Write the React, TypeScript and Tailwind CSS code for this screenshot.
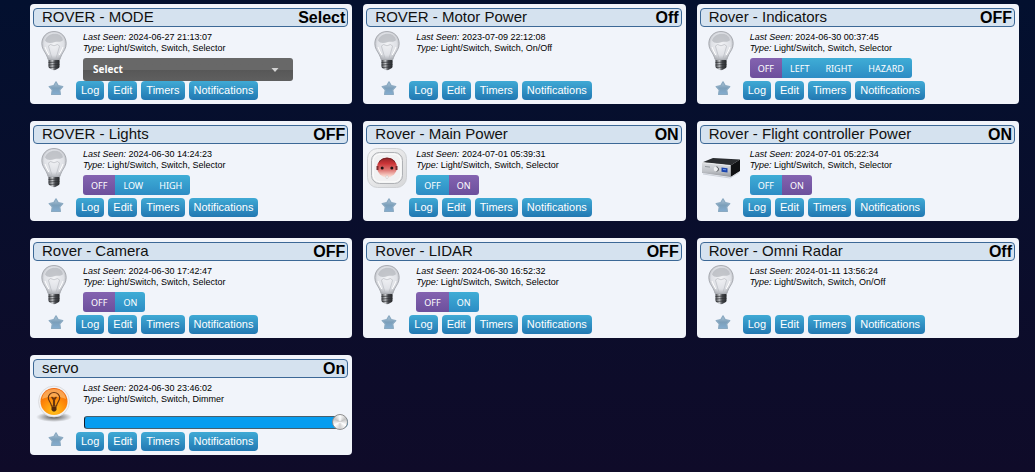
import React, { useId, useState } from "react";

type IconKind = "bulb" | "socket" | "amplifier" | "dimmer";

interface Device {
  name: string;
  status: string;
  lastSeen: string;
  type: string;
  icon: IconKind;
  levels?: string[];
  dropdown?: string[];
  dimmer?: number;
}

const devices: Device[] = [
  { name: "ROVER - MODE", status: "Select", lastSeen: "2024-06-27 21:13:07", type: "Light/Switch, Switch, Selector", icon: "bulb", dropdown: ["Select"] },
  { name: "ROVER - Motor Power", status: "Off", lastSeen: "2023-07-09 22:12:08", type: "Light/Switch, Switch, On/Off", icon: "bulb" },
  { name: "Rover - Indicators", status: "OFF", lastSeen: "2024-06-30 00:37:45", type: "Light/Switch, Switch, Selector", icon: "bulb", levels: ["OFF", "LEFT", "RIGHT", "HAZARD"] },
  { name: "ROVER - Lights", status: "OFF", lastSeen: "2024-06-30 14:24:23", type: "Light/Switch, Switch, Selector", icon: "bulb", levels: ["OFF", "LOW", "HIGH"] },
  { name: "Rover - Main Power", status: "ON", lastSeen: "2024-07-01 05:39:31", type: "Light/Switch, Switch, Selector", icon: "socket", levels: ["OFF", "ON"] },
  { name: "Rover - Flight controller Power", status: "ON", lastSeen: "2024-07-01 05:22:34", type: "Light/Switch, Switch, Selector", icon: "amplifier", levels: ["OFF", "ON"] },
  { name: "Rover - Camera", status: "OFF", lastSeen: "2024-06-30 17:42:47", type: "Light/Switch, Switch, Selector", icon: "bulb", levels: ["OFF", "ON"] },
  { name: "Rover - LIDAR", status: "OFF", lastSeen: "2024-06-30 16:52:32", type: "Light/Switch, Switch, Selector", icon: "bulb", levels: ["OFF", "ON"] },
  { name: "Rover - Omni Radar", status: "Off", lastSeen: "2024-01-11 13:56:24", type: "Light/Switch, Switch, On/Off", icon: "bulb" },
  { name: "servo", status: "On", lastSeen: "2024-06-30 23:46:02", type: "Light/Switch, Switch, Dimmer", icon: "dimmer", dimmer: 100 },
];

const actions = ["Log", "Edit", "Timers", "Notifications"];

const BulbIcon = () => {
  const id = useId();
  return (
    <svg viewBox="0 0 40 40" className="size-10" aria-hidden="true">
      <defs>
        <radialGradient id={`${id}g`} cx="0.5" cy="0.45" r="0.6">
          <stop offset="0" stopColor="#f1f2f5" />
          <stop offset="0.65" stopColor="#dfe1e6" />
          <stop offset="1" stopColor="#a4a7ad" />
        </radialGradient>
        <linearGradient id={`${id}b`} x1="0" x2="1">
          <stop offset="0" stopColor="#3c3e42" />
          <stop offset="0.35" stopColor="#c9cbce" />
          <stop offset="0.6" stopColor="#4b4d52" />
          <stop offset="1" stopColor="#26282b" />
        </linearGradient>
      </defs>
      <path d="M20 0.5C12.6 0.5 7.8 6 7.8 12.6c0 5 2.7 7.6 4.4 11 1 2 1.500 3.400 1.900 5h11.800c.4-1.600.9-3 1.900-5 1.700-3.400 4.400-6 4.400-11C32.200 6 27.400.5 20 .5z" fill={`url(#${id}g)`} stroke="#9da0a6" strokeWidth="0.8" />
      <path d="M11 9.500C12.500 4.500 17 2.300 22 2.800c4 .5 6.500 3 7 6.500-3 2.500-5 1-8 1.700-4 1-7 2-10-1.500z" fill="#b2b5bb" opacity="0.7" />
      <path d="M14 15.500l2.500-2 3.500 1.300 3.500-1.300 2.500 2M14.500 15.500l3.500 12M25.500 15.500l-3.500 12" fill="none" stroke="#b9bcc1" strokeWidth="0.7" />
      <path d="M11 16c.8 3 2.500 5 3.800 8M29 16c-.8 3-2.500 5-3.800 8" fill="none" stroke="#fff" strokeWidth="1" />
      <path d="M14.500 29h11v7c-.5 1.200-1.500 1.700-2.700 2-.6 1.500-5 1.500-5.600 0-1.200-.3-2.200-.8-2.700-2z" fill={`url(#${id}b)`} />
      <path d="M14.500 31.500l11-.6M14.500 34l11-.6M15 36.500l10-.6" stroke="#2c2e31" strokeWidth="0.7" />
    </svg>
  );
};

const SocketIcon = () => (
  <svg viewBox="0 0 40 40" className="size-10" aria-hidden="true">
    <defs>
      <linearGradient id="socket-red" x1="0" y1="0" x2="0" y2="1">
        <stop offset="0" stopColor="#8e2226" />
        <stop offset="0.3" stopColor="#cb3437" />
        <stop offset="0.65" stopColor="#e07f7b" />
        <stop offset="0.9" stopColor="#f7cfc6" />
        <stop offset="1" stopColor="#fbe9e3" />
      </linearGradient>
      <linearGradient id="socket-plate" x1="0" y1="0" x2="1" y2="1">
        <stop offset="0" stopColor="#f6f6f7" />
        <stop offset="1" stopColor="#d6d7d9" />
      </linearGradient>
    </defs>
    <rect x="0.5" y="0.5" width="39" height="39" rx="10" fill="url(#socket-plate)" stroke="#cfd1d4" />
    <rect x="4.5" y="4.5" width="31" height="31" rx="8" fill="#e9eaeb" stroke="#afb1b5" />
    <rect x="6" y="6" width="28" height="28" rx="7" fill="#f1f1f2" stroke="#fff" />
    <circle cx="20" cy="19.500" r="10" fill="url(#socket-red)" />
    <path d="M12 14.500c2-5.500 14-5.500 16 0" fill="none" stroke="#7b2326" strokeWidth="1" />
    <path d="M9.500 18h2v4h-2zM28.500 18h2v4h-2z" fill="#7c2a2e" />
    <circle cx="15.200" cy="20" r="1.500" fill="#1e1113" />
    <circle cx="24.800" cy="20" r="1.500" fill="#1e1113" />
    <rect x="19" y="27.500" width="2" height="3" rx="1" fill="#fff" stroke="#b9b2b2" strokeWidth="0.500" />
  </svg>
);

const AmplifierIcon = () => (
  <svg viewBox="0 0 40 40" className="size-10" aria-hidden="true">
    <defs>
      <linearGradient id="amp-front" x1="0" y1="0" x2="0" y2="1">
        <stop offset="0" stopColor="#dcdee1" />
        <stop offset="0.6" stopColor="#bfc2c7" />
        <stop offset="1" stopColor="#95989e" />
      </linearGradient>
    </defs>
    <path d="M1 14.500L12 10l27 1.500-9.500 6z" fill="#2b2d30" />
    <path d="M29.500 17.500L39 11.500v11.500l-9.500 6z" fill="#101113" />
    <path d="M1 14.500l28.500 3V29L1 25z" fill="url(#amp-front)" />
    <path d="M1 14.500l28.500 3" stroke="#f6f7f8" strokeWidth="0.800" />
    <path d="M2 26l27 4 9-5.500" fill="none" stroke="#c3c8d0" strokeWidth="0.800" />
    <circle cx="15" cy="21" r="2.300" fill="#eff0f2" />
    <path d="M15.500 18.800c2.500.5 2.500 4 .2 4.600" fill="none" stroke="#3a3d42" strokeWidth="1" />
    <path d="M20.500 19.500l6 .7v4.300l-6-.7z" fill="#1b45ae" />
    <path d="M22 21.500l3 .3" stroke="#79a2f0" strokeWidth="0.900" />
    <path d="M4 18.500l5 .6" stroke="#82868c" strokeWidth="0.800" />
  </svg>
);

const DimmerIcon = () => (
  <svg viewBox="0 0 40 40" className="size-10" aria-hidden="true">
    <defs>
      <radialGradient id="dimmer-ball" cx="0.5" cy="0.85" r="0.8">
        <stop offset="0" stopColor="#ffc21c" />
        <stop offset="0.55" stopColor="#ff8c0a" />
        <stop offset="1" stopColor="#ef6408" />
      </radialGradient>
      <radialGradient id="dimmer-shadow">
        <stop offset="0" stopColor="#555" />
        <stop offset="1" stopColor="#555" stopOpacity="0" />
      </radialGradient>
    </defs>
    <ellipse cx="20" cy="35" rx="18" ry="5" fill="url(#dimmer-shadow)" />
    <circle cx="20" cy="19.500" r="15.500" fill="#f2f2f4" stroke="#d6d7da" strokeWidth="0.800" />
    <circle cx="20" cy="19.500" r="13.500" fill="url(#dimmer-ball)" />
    <path d="M8 17C9 10 14 7 20 7s11 3 12 10c-7-3-17-3-24 0z" fill="#ffd08a" opacity="0.55" />
    <path d="M20 10.500c-3.400 0-5.700 2.500-5.700 5.300 0 3.200 2.700 4.500 3.200 8.200h5c.5-3.700 3.200-5 3.200-8.200 0-2.800-2.300-5.300-5.700-5.300zM17.500 15l2 3v5.500M22.500 15l-2 3v5.500M17.500 15l2.500 1.500 2.500-1.500" fill="none" stroke="#6a3510" strokeWidth="1.200" />
    <path d="M17.500 24.500h5v3.500l-1.500 1.500h-2L17.500 28z" fill="#54290c" />
  </svg>
);

const StarIcon = () => (
  <svg viewBox="0 0 16 16" className="size-4" aria-hidden="true">
    <defs>
      <linearGradient id="star-fill" x1="0" y1="0" x2="0" y2="1">
        <stop offset="0" stopColor="#b3c9da" />
        <stop offset="0.5" stopColor="#7c9fba" />
        <stop offset="1" stopColor="#84add0" />
      </linearGradient>
    </defs>
    <path d="M8 0.800L10.200 4.600l4.600.9-3 3.400.6 4.600H3.600l.6-4.600-3-3.400 4.600-.9z" fill="url(#star-fill)" stroke="#8aa9c1" strokeWidth="1.200" strokeLinejoin="round" />
  </svg>
);

const icons: Record<IconKind, React.FC> = {
  bulb: BulbIcon,
  socket: SocketIcon,
  amplifier: AmplifierIcon,
  dimmer: DimmerIcon,
};

const LevelButtons = ({ device }: { device: Device }) => {
  const [level, setLevel] = useState(device.status);

  return (
    <div role="group" aria-label={device.name} className="mt-1 flex h-5 w-fit overflow-hidden rounded-[3px] font-['Noto_Sans',sans-serif] text-[9px] text-white">
      {device.levels?.map((name) => (
        <button
          key={name}
          aria-pressed={name === level}
          onClick={() => setLevel(name)}
          className={
            name === level
              ? "bg-linear-to-b from-[#8463b0] to-[#6c4f9c] px-2"
              : "bg-linear-to-b from-[#3fadd6] to-[#2d8cc4] px-2"
          }>
          {name}
        </button>
      ))}
    </div>
  );
};

const LevelSelect = ({ device }: { device: Device }) => (
  <div className="relative mt-1 w-[210px]">
    <select
      aria-label={device.name}
      className="block h-[23px] w-full appearance-none rounded-[3px] bg-linear-to-b from-[#686868] from-50% via-[#575757] via-50% to-[#5f5f5f] px-[10px] font-['Open_Sans',sans-serif] text-[10px] font-bold text-white">
      {device.dropdown?.map((name) => (
        <option key={name}>{name}</option>
      ))}
    </select>
    <svg viewBox="0 0 8 4" className="pointer-events-none absolute top-[10px] right-[14px] h-1 w-2" aria-hidden="true">
      <path d="M0.500 0h7L4 4z" fill="#d4d4d4" />
    </svg>
  </div>
);

const DimmerSlider = ({ device }: { device: Device }) => {
  const [value, setValue] = useState(device.dimmer ?? 0);

  return (
    <input
      type="range"
      aria-label={device.name}
      value={value}
      onChange={(e) => setValue(Number(e.target.value))}
      className="mt-[9px] block h-4 w-full appearance-none bg-transparent pl-px [&::-webkit-slider-runnable-track]:h-[13px] [&::-webkit-slider-runnable-track]:rounded-l-[4px] [&::-webkit-slider-runnable-track]:rounded-r-[8px] [&::-webkit-slider-runnable-track]:border [&::-webkit-slider-runnable-track]:border-r-0 [&::-webkit-slider-runnable-track]:border-[#45606f] [&::-webkit-slider-runnable-track]:border-l-[#111c2c] [&::-webkit-slider-runnable-track]:bg-[#069df0] [&::-webkit-slider-thumb]:-mt-[3px] [&::-webkit-slider-thumb]:size-4 [&::-webkit-slider-thumb]:appearance-none [&::-webkit-slider-thumb]:rounded-full [&::-webkit-slider-thumb]:border [&::-webkit-slider-thumb]:border-[#8f8f8f] [&::-webkit-slider-thumb]:bg-[conic-gradient(#fff,#c4c4c4,#fff,#d0d0d0,#fff,#c4c4c4,#fff)]"
    />
  );
};

const DeviceCard = ({ device }: { device: Device }) => {
  const Icon = icons[device.icon];

  return (
    <section className="rounded-[4px] bg-[#f1f4fa] py-1 pr-1 pl-[3px] text-black">
      <header className="flex h-[19px] items-center justify-between rounded-[4px] border border-[#3c6896] bg-[#d5e2ef] pr-[2px] pl-2 leading-none">
        <h2 className="pb-[2px] text-[15px] whitespace-nowrap text-[#111]">{device.name}</h2>
        <span className="text-[16px] font-bold">{device.status}</span>
      </header>
      <div className="flex min-h-[54px] gap-[9px] pl-px">
        <div className="shrink-0 pt-1">
          <Icon />
        </div>
        <div className="min-w-0 flex-1 pt-[5px] text-[9px] leading-[11px]">
          <p>
            <em>Last Seen:</em> {device.lastSeen}
          </p>
          <p>
            <em>Type:</em> {device.type}
          </p>
          {device.dropdown && <LevelSelect device={device} />}
          {device.levels && <LevelButtons device={device} />}
          {device.dimmer !== undefined && <DimmerSlider device={device} />}
        </div>
      </div>
      <div className="flex items-start gap-3 pl-[15px]">
        <button aria-label="Favorite" className="shrink-0">
          <StarIcon />
        </button>
        <div className="flex gap-1">
          {actions.map((action) => (
            <button
              key={action}
              className="h-[19px] rounded-[4px] bg-linear-to-b from-[#40aad5] to-[#2278b2] px-[5px] text-[11px] leading-none text-white">
              {action}
            </button>
          ))}
        </div>
      </div>
    </section>
  );
};

const App: React.FC = () => {
  return (
    <main className="min-h-screen bg-linear-to-b from-[#03102f] to-[#0f0b29] pt-1 pr-4 pb-4 pl-[30px] font-['Liberation_Sans',Arial,sans-serif]">
      <div className="grid grid-cols-3 gap-x-[11px] gap-y-[17px]">
        {devices.map((device) => (
          <DeviceCard key={device.name} device={device} />
        ))}
      </div>
    </main>
  );
};

export default App;
